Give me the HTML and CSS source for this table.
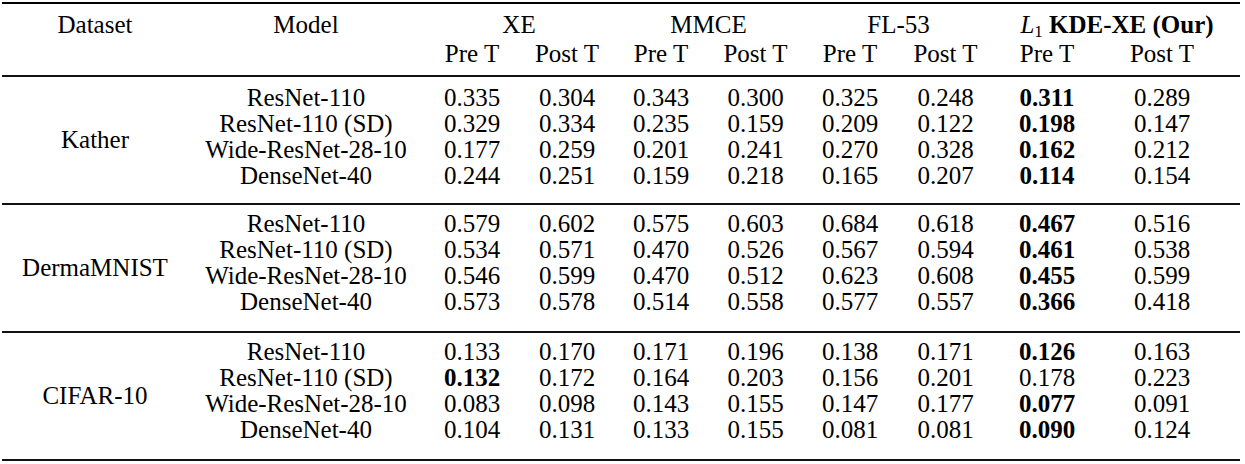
FILE: index.html
```html
<!DOCTYPE html>
<html>
<head>
<meta charset="utf-8">
<link rel="stylesheet" href="styles.css">
</head>
<body>
<table class="results">
  <colgroup>
    <col class="c-dataset"><col class="c-model">
    <col class="c-xe-pre"><col class="c-xe-post">
    <col class="c-mm-pre"><col class="c-mm-post">
    <col class="c-fl-pre"><col class="c-fl-post">
    <col class="c-kde-pre"><col class="c-kde-post">
  </colgroup>
  <thead>
    <tr class="head-top">
      <th rowspan="2" class="top">Dataset</th>
      <th rowspan="2" class="top">Model</th>
      <th colspan="2">XE</th>
      <th colspan="2">MMCE</th>
      <th colspan="2">FL-53</th>
      <th colspan="2"><span class="math">L</span><sub class="sub">1</sub> <b>KDE-XE (Our)</b></th>
    </tr>
    <tr class="head-sub">
      <th>Pre T</th><th>Post T</th>
      <th>Pre T</th><th>Post T</th>
      <th>Pre T</th><th>Post T</th>
      <th>Pre T</th><th class="last">Post T</th>
    </tr>
  </thead>
  <tbody class="first">
    <tr class="row-first"><td rowspan="4" class="ds">Kather</td><td>ResNet-110</td><td>0.335</td><td>0.304</td><td>0.343</td><td>0.300</td><td>0.325</td><td>0.248</td><td><b>0.311</b></td><td class="last">0.289</td></tr>
    <tr><td>ResNet-110 (SD)</td><td>0.329</td><td>0.334</td><td>0.235</td><td>0.159</td><td>0.209</td><td>0.122</td><td><b>0.198</b></td><td class="last">0.147</td></tr>
    <tr><td>Wide-ResNet-28-10</td><td>0.177</td><td>0.259</td><td>0.201</td><td>0.241</td><td>0.270</td><td>0.328</td><td><b>0.162</b></td><td class="last">0.212</td></tr>
    <tr class="row-last"><td>DenseNet-40</td><td>0.244</td><td>0.251</td><td>0.159</td><td>0.218</td><td>0.165</td><td>0.207</td><td><b>0.114</b></td><td class="last">0.154</td></tr>
  </tbody>
  <tbody>
    <tr class="row-first"><td rowspan="4" class="ds">DermaMNIST</td><td>ResNet-110</td><td>0.579</td><td>0.602</td><td>0.575</td><td>0.603</td><td>0.684</td><td>0.618</td><td><b>0.467</b></td><td class="last">0.516</td></tr>
    <tr><td>ResNet-110 (SD)</td><td>0.534</td><td>0.571</td><td>0.470</td><td>0.526</td><td>0.567</td><td>0.594</td><td><b>0.461</b></td><td class="last">0.538</td></tr>
    <tr><td>Wide-ResNet-28-10</td><td>0.546</td><td>0.599</td><td>0.470</td><td>0.512</td><td>0.623</td><td>0.608</td><td><b>0.455</b></td><td class="last">0.599</td></tr>
    <tr class="row-last"><td>DenseNet-40</td><td>0.573</td><td>0.578</td><td>0.514</td><td>0.558</td><td>0.577</td><td>0.557</td><td><b>0.366</b></td><td class="last">0.418</td></tr>
  </tbody>
  <tbody>
    <tr class="row-first"><td rowspan="4" class="ds">CIFAR-10</td><td>ResNet-110</td><td>0.133</td><td>0.170</td><td>0.171</td><td>0.196</td><td>0.138</td><td>0.171</td><td><b>0.126</b></td><td class="last">0.163</td></tr>
    <tr><td>ResNet-110 (SD)</td><td><b>0.132</b></td><td>0.172</td><td>0.164</td><td>0.203</td><td>0.156</td><td>0.201</td><td>0.178</td><td class="last">0.223</td></tr>
    <tr><td>Wide-ResNet-28-10</td><td>0.083</td><td>0.098</td><td>0.143</td><td>0.155</td><td>0.147</td><td>0.177</td><td><b>0.077</b></td><td class="last">0.091</td></tr>
    <tr class="row-last"><td>DenseNet-40</td><td>0.104</td><td>0.131</td><td>0.133</td><td>0.155</td><td>0.081</td><td>0.081</td><td><b>0.090</b></td><td class="last">0.124</td></tr>
  </tbody>
</table>
</body>
</html>
```

FILE: styles.css
```css
html, body {
  margin: 0;
  padding: 0;
  background: #ffffff;
}

body {
  font-family: "Liberation Serif", "Times New Roman", serif;
  font-size: 25px;
  color: #000;
}

.results {
  margin: 2px 0 0 2px;
  width: 1238px;
  table-layout: fixed;
  border-collapse: collapse;
  border-top: 2px solid #000;
  border-bottom: 2px solid #000;
}

.c-dataset { width: 186px; }
.c-model { width: 236px; }
.c-xe-pre { width: 96px; }
.c-xe-post { width: 94px; }
.c-mm-pre { width: 94px; }
.c-mm-post { width: 95px; }
.c-fl-pre { width: 94px; }
.c-fl-post { width: 97px; }
.c-kde-pre { width: 106px; }
.c-kde-post { width: 140px; }

.results th,
.results td {
  padding: 0;
  line-height: 26px;
  text-align: center;
  font-weight: normal;
  white-space: nowrap;
  vertical-align: top;
}

.results thead {
  border-bottom: 2px solid #111;
}

.results tbody {
  border-bottom: 2px solid #111;
}

.head-top th {
  padding-top: 8px;
}

.head-top th.top {
  vertical-align: top;
}

.head-sub th {
  padding-top: 3px;
  padding-bottom: 8px;
}

.results .last {
  padding-right: 16px;
}

.results b {
  font-weight: bold;
}

.math {
  font-style: italic;
}

.sub {
  font-size: 17px;
  line-height: 0;
  vertical-align: -4px;
}

.row-first td {
  padding-top: 6px;
}

.row-last td {
  padding-bottom: 16px;
}

.first .row-first td {
  padding-top: 8px;
}

.first .row-last td {
  padding-bottom: 14px;
}

.results td.ds {
  vertical-align: middle;
  padding: 0;
}
```
